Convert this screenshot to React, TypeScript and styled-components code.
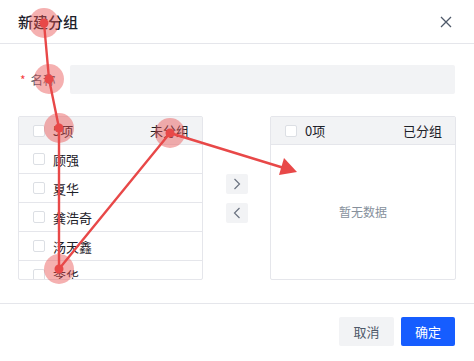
import React from "react";
import styled, { createGlobalStyle } from "styled-components";

const GlobalStyle = createGlobalStyle`
  body {
    margin: 0;
    background: #ffffff;
    font-family: "Noto Sans CJK SC", "Noto Sans", Inter, sans-serif;
  }
  * {
    box-sizing: border-box;
  }
`;

const Dialog = styled.div`
  position: relative;
  width: 474px;
  height: 361px;
  background: #ffffff;
  overflow: hidden;
`;

const Header = styled.div`
  height: 44px;
  display: flex;
  align-items: center;
  justify-content: space-between;
  padding: 0 22px 0 18px;
  border-bottom: 1px solid #e5e6eb;
`;

const Title = styled.span`
  font-size: 15px;
  font-weight: 500;
  color: #1d2129;
`;

const Close = styled.button`
  width: 12px;
  height: 12px;
  padding: 0;
  border: 0;
  background: none;
  display: flex;
  color: #4e5969;
`;

const Body = styled.div`
  padding: 21px 18px 23px 18px;
`;

const FormRow = styled.div`
  display: flex;
  align-items: center;
  height: 29px;
`;

const Label = styled.label`
  width: 52px;
  padding-left: 2px;
  font-size: 12.5px;
  color: #4e5969;
  display: flex;
  align-items: center;
`;

const Star = styled.span`
  color: #f53f3f;
  font-size: 12px;
  margin-right: 5px;
`;

const Input = styled.input`
  flex: 1;
  height: 29px;
  margin-right: 1px;
  border: 0;
  border-radius: 2px;
  background: #f2f3f5;
  outline: none;
`;

const Transfer = styled.div`
  display: flex;
  margin-top: 22px;
  height: 164px;
`;

const Panel = styled.div<{ $width: number }>`
  width: ${(p) => p.$width}px;
  height: 164px;
  border: 1px solid #e5e6eb;
  border-radius: 2px;
  display: flex;
  flex-direction: column;
`;

const PanelHead = styled.div`
  height: 28px;
  flex: none;
  display: flex;
  align-items: center;
  padding: 0 13px 0 14px;
  background: #f2f3f5;
  border-bottom: 1px solid #e5e6eb;
  font-size: 13px;
  color: #1d2129;
`;

const Count = styled.span`
  flex: 1;
`;

const Check = styled.span`
  width: 12px;
  height: 12px;
  flex: none;
  border: 1px solid #dcdfe4;
  border-radius: 2px;
  background: #ffffff;
  margin-right: 8px;
`;

const List = styled.div`
  flex: 1;
  overflow: hidden;
`;

const Row = styled.div`
  height: 29px;
  flex: none;
  display: flex;
  align-items: center;
  padding-left: 14px;
  border-bottom: 1px solid #e5e6eb;
  font-size: 13px;
  color: #1d2129;
`;

const Empty = styled.div`
  height: 100%;
  display: flex;
  align-items: center;
  justify-content: center;
  font-size: 12px;
  color: #86909c;
  padding-bottom: 2px;
`;

const Ops = styled.div`
  width: 67px;
  display: flex;
  flex-direction: column;
  align-items: center;
  justify-content: center;
  gap: 9px;
`;

const OpButton = styled.button`
  width: 22px;
  height: 20px;
  padding: 0;
  border: 0;
  border-radius: 2px;
  background: #f2f3f5;
  color: #6b7380;
  display: flex;
  align-items: center;
  justify-content: center;
`;

const Footer = styled.div`
  border-top: 1px solid #e5e6eb;
  padding: 13px 19px 0 0;
  display: flex;
  justify-content: flex-end;
  gap: 7px;
`;

const Button = styled.button<{ $primary?: boolean }>`
  height: 29px;
  width: ${(p) => (p.$primary ? 54 : 55)}px;
  border: 0;
  border-radius: 2px;
  font-family: inherit;
  font-size: 13px;
  background: ${(p) => (p.$primary ? "#165dff" : "#f2f3f5")};
  color: ${(p) => (p.$primary ? "#ffffff" : "#4e5969")};
`;

const Overlay = styled.svg`
  position: absolute;
  left: 0;
  top: 0;
  pointer-events: none;
`;

const names = ["顾强", "夏华", "龚浩奇", "汤天鑫", "李华"];

const spots = [
  [44, 23],
  [49, 79],
  [59, 128],
  [59, 269],
  [170, 133],
];

function Chevron({ left }: { left?: boolean }) {
  return (
    <svg width="10" height="12" viewBox="0 0 10 12" fill="none">
      <path
        d={left ? "M7.5 1 L2.5 6 L7.5 11" : "M2.5 1 L7.5 6 L2.5 11"}
        stroke="currentColor"
        strokeWidth="1.2"
      />
    </svg>
  );
}

export default function App() {
  return (
    <Dialog>
      <GlobalStyle />
      <Header>
        <Title>新建分组</Title>
        <Close>
          <svg width="12" height="12" viewBox="0 0 12 12">
            <path d="M1 1 L11 11 M11 1 L1 11" stroke="currentColor" strokeWidth="1.3" />
          </svg>
        </Close>
      </Header>
      <Body>
        <FormRow>
          <Label>
            <Star>*</Star>名称
          </Label>
          <Input />
        </FormRow>
        <Transfer>
          <Panel $width={185}>
            <PanelHead>
              <Check />
              <Count>5项</Count>
              <span>未分组</span>
            </PanelHead>
            <List>
              {names.map((n) => (
                <Row key={n}>
                  <Check />
                  {n}
                </Row>
              ))}
            </List>
          </Panel>
          <Ops>
            <OpButton>
              <Chevron />
            </OpButton>
            <OpButton>
              <Chevron left />
            </OpButton>
          </Ops>
          <Panel $width={186}>
            <PanelHead>
              <Check />
              <Count>0项</Count>
              <span>已分组</span>
            </PanelHead>
            <List>
              <Empty>暂无数据</Empty>
            </List>
          </Panel>
        </Transfer>
      </Body>
      <Footer>
        <Button>取消</Button>
        <Button $primary>确定</Button>
      </Footer>

      {/* annotation drawn over the dialog */}
      <Overlay width="474" height="361" viewBox="0 0 474 361">
        {spots.map(([x, y]) => (
          <circle key={`c${x}-${y}`} cx={x} cy={y} r="15" fill="rgba(232, 80, 80, 0.45)" />
        ))}
        <polyline
          points="44,23 49,79 59,128 59,269 170,133 284,168"
          fill="none"
          stroke="#e84848"
          strokeWidth="2.4"
          strokeLinejoin="round"
        />
        <polygon points="297,172 284,158 279,175" fill="#e84848" />
        {spots.map(([x, y]) => (
          <circle key={`d${x}-${y}`} cx={x} cy={y} r="4.5" fill="#e84848" />
        ))}
      </Overlay>
    </Dialog>
  );
}
